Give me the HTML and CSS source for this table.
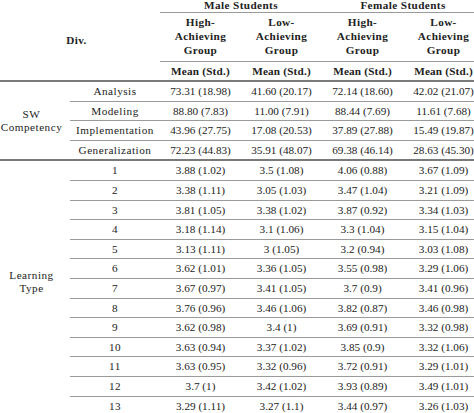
FILE: index.html
```html
<!DOCTYPE html>
<html>
<head>
<meta charset="utf-8">
<link rel="stylesheet" href="styles.css">
</head>
<body>
<table class="stats">
  <colgroup>
    <col class="c-cat">
    <col class="c-item">
    <col class="c-val">
    <col class="c-val">
    <col class="c-val">
    <col class="c-val">
  </colgroup>
  <thead>
    <tr>
      <th class="div-head" colspan="2" rowspan="3">Div.</th>
      <th class="group-head" colspan="2">Male Students</th>
      <th class="group-head" colspan="2">Female Students</th>
    </tr>
    <tr>
      <th class="sub-head">High-<br>Achieving<br>Group</th>
      <th class="sub-head">Low-<br>Achieving<br>Group</th>
      <th class="sub-head">High-<br>Achieving<br>Group</th>
      <th class="sub-head">Low-<br>Achieving<br>Group</th>
    </tr>
    <tr>
      <th class="mean-head">Mean (Std.)</th>
      <th class="mean-head">Mean (Std.)</th>
      <th class="mean-head">Mean (Std.)</th>
      <th class="mean-head">Mean (Std.)</th>
    </tr>
  </thead>
  <tbody>
    <tr>
      <th class="cat" rowspan="4">SW<br>Competency</th>
      <td class="item">Analysis</td><td>73.31 (18.98)</td><td>41.60 (20.17)</td><td>72.14 (18.60)</td><td>42.02 (21.07)</td>
    </tr>
    <tr><td class="item">Modeling</td><td>88.80 (7.83)</td><td>11.00 (7.91)</td><td>88.44 (7.69)</td><td>11.61 (7.68)</td></tr>
    <tr><td class="item">Implementation</td><td>43.96 (27.75)</td><td>17.08 (20.53)</td><td>37.89 (27.88)</td><td>15.49 (19.87)</td></tr>
    <tr class="last"><td class="item">Generalization</td><td>72.23 (44.83)</td><td>35.91 (48.07)</td><td>69.38 (46.14)</td><td>28.63 (45.30)</td></tr>
  </tbody>
  <tbody>
    <tr>
      <th class="cat cat-lt" rowspan="13">Learning<br>Type</th>
      <td class="item">1</td><td>3.88 (1.02)</td><td>3.5 (1.08)</td><td>4.06 (0.88)</td><td>3.67 (1.09)</td>
    </tr>
    <tr><td class="item">2</td><td>3.38 (1.11)</td><td>3.05 (1.03)</td><td>3.47 (1.04)</td><td>3.21 (1.09)</td></tr>
    <tr><td class="item">3</td><td>3.81 (1.05)</td><td>3.38 (1.02)</td><td>3.87 (0.92)</td><td>3.34 (1.03)</td></tr>
    <tr><td class="item">4</td><td>3.18 (1.14)</td><td>3.1 (1.06)</td><td>3.3 (1.04)</td><td>3.15 (1.04)</td></tr>
    <tr><td class="item">5</td><td>3.13 (1.11)</td><td>3 (1.05)</td><td>3.2 (0.94)</td><td>3.03 (1.08)</td></tr>
    <tr><td class="item">6</td><td>3.62 (1.01)</td><td>3.36 (1.05)</td><td>3.55 (0.98)</td><td>3.29 (1.06)</td></tr>
    <tr><td class="item">7</td><td>3.67 (0.97)</td><td>3.41 (1.05)</td><td>3.7 (0.9)</td><td>3.41 (0.96)</td></tr>
    <tr><td class="item">8</td><td>3.76 (0.96)</td><td>3.46 (1.06)</td><td>3.82 (0.87)</td><td>3.46 (0.98)</td></tr>
    <tr><td class="item">9</td><td>3.62 (0.98)</td><td>3.4 (1)</td><td>3.69 (0.91)</td><td>3.32 (0.98)</td></tr>
    <tr><td class="item">10</td><td>3.63 (0.94)</td><td>3.37 (1.02)</td><td>3.85 (0.9)</td><td>3.32 (1.06)</td></tr>
    <tr><td class="item">11</td><td>3.63 (0.95)</td><td>3.32 (0.96)</td><td>3.72 (0.91)</td><td>3.29 (1.01)</td></tr>
    <tr><td class="item">12</td><td>3.7 (1)</td><td>3.42 (1.02)</td><td>3.93 (0.89)</td><td>3.49 (1.01)</td></tr>
    <tr class="last"><td class="item">13</td><td>3.29 (1.11)</td><td>3.27 (1.1)</td><td>3.44 (0.97)</td><td>3.26 (1.03)</td></tr>
  </tbody>
</table>
</body>
</html>
```

FILE: styles.css
```css
html, body {
  margin: 0;
  padding: 0;
  background: #ffffff;
  overflow: hidden;
}

.stats {
  border-collapse: collapse;
  table-layout: fixed;
  width: 484px;
  font-family: "Liberation Serif", "Tinos", "Times New Roman", serif;
  font-size: 11.2px;
  color: #222222;
}

.c-cat { width: 70px; }
.c-item { width: 90px; }
.c-val { width: 81px; }

.stats th,
.stats td {
  padding: 0;
  text-align: center;
  vertical-align: middle;
  font-weight: normal;
}

.stats thead th {
  font-weight: bold;
  letter-spacing: 0.4px;
}

.stats .div-head {
  padding-right: 7px;
  border-bottom: 2px solid #7a7a7a;
}

.stats .group-head {
  line-height: 10px;
  padding-top: 0;
  padding-bottom: 2px;
  border-bottom: 1px solid #9a9a9a;
}

.stats .sub-head {
  line-height: 14px;
  padding-top: 2px;
  padding-bottom: 4px;
  border-bottom: 1px solid #9a9a9a;
}

.stats .mean-head {
  line-height: 18px;
  letter-spacing: 0.2px;
  border-bottom: 2px solid #7a7a7a;
}

.stats tbody td {
  line-height: 18.6px;
  border-bottom: 1px solid #9a9a9a;
}

.stats tbody tr.last td,
.stats tbody th.cat {
  border-bottom: 2px solid #7a7a7a;
}

.stats .item {
  letter-spacing: 0.5px;
}

.stats .cat {
  line-height: 13px;
  letter-spacing: 0.5px;
  padding-right: 7px;
}

.stats .cat-lt {
  padding-bottom: 12px;
}
```
